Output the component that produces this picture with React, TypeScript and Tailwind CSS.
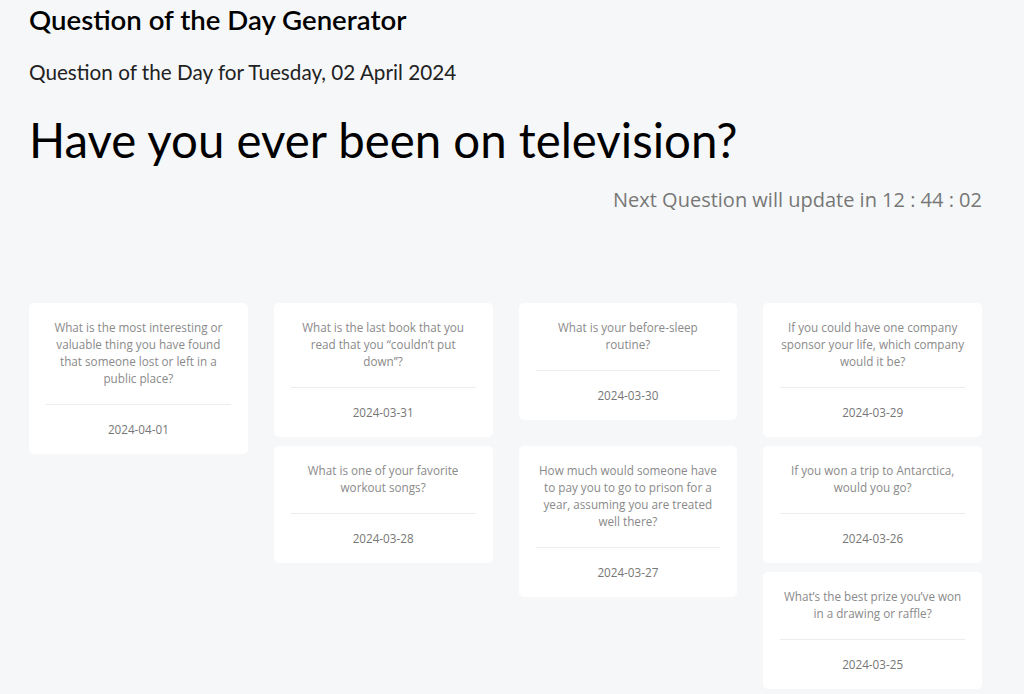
import React from "react";

interface Question {
  text: string;
  date: string;
  offset?: string;
}

const columns: Question[][] = [
  [
    {
      text: "What is the most interesting or valuable thing you have found that someone lost or left in a public place?",
      date: "2024-04-01",
    },
  ],
  [
    { text: "What is the last book that you read that you \u201ccouldn\u2019t put down\u201d?", date: "2024-03-31" },
    { text: "What is one of your favorite workout songs?", date: "2024-03-28" },
  ],
  [
    { text: "What is your before-sleep routine?", date: "2024-03-30" },
    {
      text: "How much would someone have to pay you to go to prison for a year, assuming you are treated well there?",
      date: "2024-03-27",
      offset: "mt-[17px]",
    },
  ],
  [
    { text: "If you could have one company sponsor your life, which company would it be?", date: "2024-03-29" },
    { text: "If you won a trip to Antarctica, would you go?", date: "2024-03-26" },
    { text: "What\u2019s the best prize you\u2019ve won in a drawing or raffle?", date: "2024-03-25" },
  ],
];

function QuestionCard({ q }: { q: Question }) {
  return (
    <div className={`rounded-[5px] bg-white px-[17px] text-center font-['Open_Sans',sans-serif] ${q.offset ?? ""}`}>
      <p className="pt-4 pb-[17px] text-[11.7px] leading-[17px] text-[#8a8a8a]">{q.text}</p>
      <div className="border-t border-[#ececec] pt-[16px] pb-4 text-[11.7px] leading-[17px] text-[#777]">
        {q.date}
      </div>
    </div>
  );
}

export default function App() {
  return (
    <div className="min-h-[694px] bg-[#f6f7f9] px-[29px] text-black">
      <h1 className="pt-[3px] font-['Lato',sans-serif] text-[27.6px] font-semibold leading-[34px]">
        Question of the Day Generator
      </h1>
      <h2 className="mt-[21px] font-['Lato',sans-serif] text-[20.7px] leading-[28px] text-[#222]">
        Question of the Day for Tuesday, 02 April 2024
      </h2>
      <p className="mt-[25px] font-['Lato',sans-serif] text-[47.4px] leading-[58px]">
        Have you ever been on television?
      </p>
      <div className="mr-[13px] mt-[17px] text-right font-['Open_Sans',sans-serif] text-[20px] leading-[28px] text-[#777]">
        Next Question will update in 12 : 44 : 02
      </div>

      <div className="mt-[89px] mr-[13px] grid grid-cols-4 items-start gap-x-[26px] pb-4">
        {columns.map((col, i) => (
          <div key={i} className="flex flex-col gap-[9px]">
            {col.map((q) => (
              <QuestionCard key={q.date} q={q} />
            ))}
          </div>
        ))}
      </div>
    </div>
  );
}
